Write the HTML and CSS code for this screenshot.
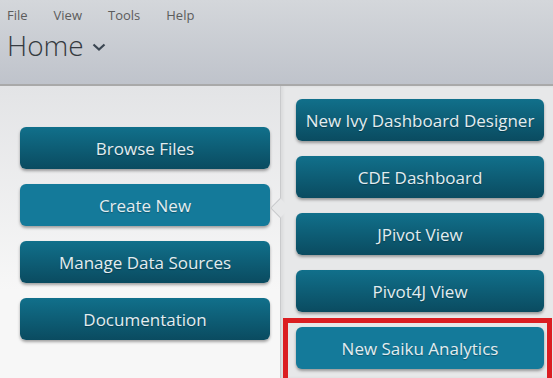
FILE: index.html
```html
<!DOCTYPE html>
<html lang="en">
<head>
    <meta charset="UTF-8">
    <meta name="viewport" content="width=device-width, initial-scale=1.0">
    <title>Home</title>
    <link rel="stylesheet" href="styles.css">
</head>
<body>
    <header class="topbar">
        <nav class="menu">
            <span>File</span>
            <span>View</span>
            <span>Tools</span>
            <span>Help</span>
        </nav>
        <div class="title">
            <h1>Home</h1>
            <svg class="chevron" width="14" height="8" viewBox="0 0 14 8">
                <path d="M1.5 1.5 L7 6.5 L12.5 1.5" fill="none" stroke="#3b4652" stroke-width="2.2"/>
            </svg>
        </div>
    </header>

    <main class="panels">
        <div class="left-panel">
            <button class="btn">Browse Files</button>
            <button class="btn active">Create New</button>
            <button class="btn">Manage Data Sources</button>
            <button class="btn">Documentation</button>
        </div>
        <div class="right-panel">
            <button class="btn">New Ivy Dashboard Designer</button>
            <button class="btn">CDE Dashboard</button>
            <button class="btn">JPivot View</button>
            <button class="btn">Pivot4J View</button>
            <button class="btn active highlighted">New Saiku Analytics</button>
        </div>
    </main>
</body>
</html>
```

FILE: styles.css
```css
/* General Reset */
* {
    margin: 0;
    padding: 0;
    box-sizing: border-box;
    font-family: 'Open Sans', 'Liberation Sans', sans-serif;
}

body {
    width: 553px;
    height: 378px;
    overflow: hidden;
    background: #f3f3f3;
}

.topbar {
    height: 86px;
    background: linear-gradient(to bottom, #d4d7db, #bfc3cb);
    border-bottom: 2px solid #a9a9a9;
    padding: 6px 0 0 7px;
}

.menu {
    display: flex;
    gap: 26px;
    font-size: 13px;
    color: #5c5c5c;
}

.title {
    display: flex;
    align-items: center;
    gap: 8px;
    margin-top: 4px;
}

h1 {
    font-size: 28px;
    font-weight: 300;
    color: #353a40;
    line-height: 34px;
}

.chevron {
    margin-top: 3px;
}

.panels {
    display: flex;
    height: 292px;
}

.left-panel {
    width: 280px;
    background: linear-gradient(to bottom, #e3e4e6, #f7f7f7 70%);
    display: flex;
    flex-direction: column;
    gap: 15px;
    padding: 41px 0 0 20px;
}

.right-panel {
    position: relative;
    flex: 1;
    background: #e7e8e9;
    border-left: 1px solid #c9cacc;
    box-shadow: inset 2px 0 3px rgba(0, 0, 0, 0.06);
    display: flex;
    flex-direction: column;
    gap: 15px;
    padding: 13px 0 0 15px;
}

/* pointer towards the selected item */
.right-panel::before {
    content: '';
    position: absolute;
    left: -8px;
    top: 115px;
    width: 13px;
    height: 13px;
    background: #e7e8e9;
    border-left: 1px solid #c9cacc;
    border-bottom: 1px solid #c9cacc;
    transform: rotate(45deg);
}

.btn {
    width: 250px;
    height: 42px;
    border: none;
    border-radius: 6px;
    background: linear-gradient(to bottom, #11708b, #0a4b60);
    color: #e2edf1;
    font-size: 17px;
    text-shadow: 0 1px 1px rgba(0, 0, 0, 0.3);
    box-shadow: 0 2px 3px rgba(0, 0, 0, 0.35);
}

.right-panel .btn {
    width: 248px;
}

.btn.active {
    background: #147a9a;
}

.highlighted {
    position: relative;
}

.highlighted::after {
    content: '';
    position: absolute;
    left: -13px;
    right: -8px;
    top: -9px;
    height: 60px;
    border: 5px solid #db1e22;
}
```
